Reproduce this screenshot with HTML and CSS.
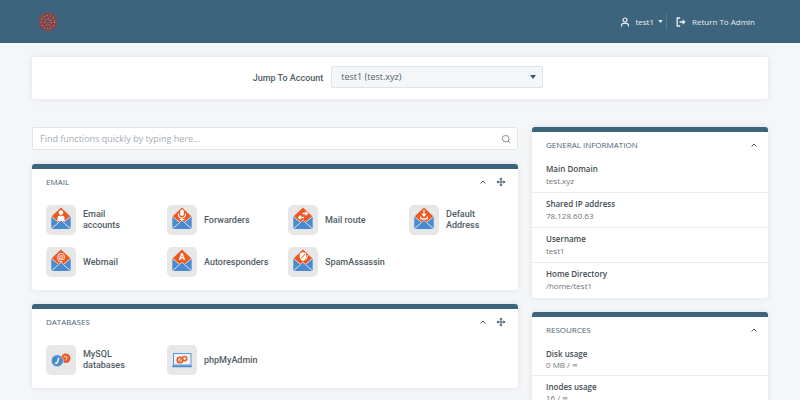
FILE: index.html
```html
<!DOCTYPE html>
<html lang="en">
<head>
<meta charset="utf-8">
<meta name="viewport" content="width=device-width, initial-scale=1">
<title>Control panel</title>
<link rel="stylesheet" href="styles.css">
</head>
<body>
<svg class="defs" aria-hidden="true">
  <defs>
    <g id="flap">
      <path d="M15 2.500 L24.500 11.500 L15 20 L5.500 11.500 Z" fill="#ec5a24"/>
    </g>
    <g id="pocket">
      <path d="M5.300 11.500 L12.500 17.500 L5.300 23.500 Z M24.700 11.500 L17.500 17.500 L24.700 23.500 Z" fill="#4a8bd0"/>
      <path d="M5.500 24 L15 15.500 L24.500 24 Z" fill="#4a8bd0"/>
      <path d="M12.500 17.600 L5.500 23.800 M17.500 17.600 L24.500 23.800" fill="none" stroke="#f5f5f5" stroke-width=".6"/>
      <path d="M5.300 11.300 L12.500 17.400 L15 15.200 L17.500 17.400 L24.700 11.300" fill="none" stroke="#f5f5f5" stroke-width=".7"/>
    </g>
    <symbol id="chevron" viewBox="0 0 8 8"><path d="M1.500 5.500 L4 3 L6.500 5.500" fill="none" stroke="currentColor" stroke-width="1"/></symbol>
    <symbol id="move" viewBox="0 0 10 10"><path d="M5 1v8M1 5h8" stroke="currentColor" stroke-width="1"/><path d="M5 .5 3.300 2.600h3.400ZM5 9.500 3.300 7.400h3.400ZM.5 5l2.100-1.700v3.400ZM9.500 5 7.400 3.300v3.400Z" fill="currentColor"/></symbol>
  </defs>
</svg>

<header class="topbar">
  <a class="logo" href="#" aria-label="Home">
    <svg viewBox="0 0 20 20" width="20" height="20" aria-hidden="true">
      <circle cx="10" cy="10" r="8.500" fill="#7a4a4e"/>
      <circle cx="10" cy="10" r="8.500" fill="none" stroke="#a8383e" stroke-width="1.400" stroke-dasharray="1.700 .7"/>
      <circle cx="10" cy="10" r="6.600" fill="none" stroke="#b09a96" stroke-width="1.200" stroke-dasharray="1 2.300"/>
      <circle cx="10" cy="10" r="5" fill="none" stroke="#9c3238" stroke-width="1.500" stroke-dasharray="1.700 1.500"/>
      <circle cx="10" cy="10" r="3.300" fill="none" stroke="#a89490" stroke-width="1.200" stroke-dasharray="1 2"/>
      <circle cx="10" cy="10" r="1.500" fill="none" stroke="#9c4a4c" stroke-width="1" stroke-dasharray="1 1"/>
    </svg>
  </a>
  <nav class="topnav">
    <button class="user" type="button">
      <svg viewBox="0 0 10 10" width="10" height="10" aria-hidden="true"><circle cx="5" cy="3" r="2" fill="none" stroke="currentColor" stroke-width="1.200"/><path d="M1.500 9.500V8.400C1.500 7 3 6.100 5 6.100S8.500 7 8.500 8.400V9.500" fill="none" stroke="currentColor" stroke-width="1.200"/></svg>
      <span>test1</span>
      <svg class="caret" viewBox="0 0 6 4" width="5" height="3" aria-hidden="true"><path d="M0 0h6L3 4Z" fill="currentColor"/></svg>
    </button>
    <a class="return" href="#">
      <svg viewBox="0 0 10 10" width="10" height="10" aria-hidden="true"><path d="M4.200 1H1.200v8h3M3.500 5H8" fill="none" stroke="currentColor" stroke-width="1.300"/><path d="M6.600 2.300 9.600 5 6.600 7.700Z" fill="currentColor"/></svg>
      <span>Return To Admin</span>
    </a>
  </nav>
</header>

<div class="page">
  <form class="jump">
    <label for="account">Jump To Account</label>
    <select id="account"><option>test1 (test.xyz)</option></select>
  </form>

  <div class="columns">
    <main class="stack">
      <div class="search">
        <input type="search" aria-label="Find functions" placeholder="Find functions quickly by typing here...">
        <svg viewBox="0 0 10 10" width="10" height="10" aria-hidden="true"><circle cx="4.700" cy="4.700" r="3.300" fill="none" stroke="currentColor"/><path d="M7 7l2.200 2.200" stroke="currentColor"/></svg>
      </div>

      <section class="panel">
        <div class="head">
          <h2>EMAIL</h2>
          <button type="button" aria-label="Collapse"><svg width="8" height="8"><use href="#chevron"/></svg></button>
          <button type="button" aria-label="Move"><svg width="10" height="10"><use href="#move"/></svg></button>
        </div>
        <div class="tiles">
          <a class="tile" href="#"><svg viewBox="0 0 30 30"><use href="#flap"/><circle cx="15" cy="7.600" r="2.300" fill="#fff"/><path d="M11.500 16V12.800q0-2 2-2h3q2 0 2 2V16Z" fill="#fff"/><use href="#pocket"/></svg><span>Email<br>accounts</span></a>
          <a class="tile" href="#"><svg viewBox="0 0 30 30"><use href="#flap"/><rect x="13.200" y="4.500" width="3.600" height="6.500" rx="1.800" fill="#fff"/><path d="M11.500 8.500v1a3.500 3.500 0 0 0 7 0v-1M15 13v2.500M12.500 14.500h5" fill="none" stroke="#fff" stroke-width="1.100"/><use href="#pocket"/></svg><span>Forwarders</span></a>
          <a class="tile" href="#"><svg viewBox="0 0 30 30"><use href="#flap"/><path d="M14.500 8.500H18M16 12.500h-4" stroke="#fff" stroke-width="1.500"/><path d="M17.500 6l3 2.500-3 2.500ZM12.700 10l-3 2.500 3 2.500Z" fill="#fff"/><use href="#pocket"/></svg><span>Mail route</span></a>
          <a class="tile" href="#"><svg viewBox="0 0 30 30"><use href="#flap"/><path d="M15 5v5M11.800 11.500v2.300h6.400v-2.300" fill="none" stroke="#fff" stroke-width="1.200"/><path d="M12.500 8.800h5L15 12Z" fill="#fff"/><use href="#pocket"/></svg><span>Default<br>Address</span></a>
          <a class="tile" href="#"><svg viewBox="0 0 30 30"><use href="#flap"/><text x="15" y="12.500" text-anchor="middle" font-size="9">@</text><use href="#pocket"/></svg><span>Webmail</span></a>
          <a class="tile" href="#"><svg viewBox="0 0 30 30"><use href="#flap"/><text x="15" y="13" text-anchor="middle" font-size="9" font-weight="700">A</text><use href="#pocket"/></svg><span>Autoresponders</span></a>
          <a class="tile" href="#"><svg viewBox="0 0 30 30"><use href="#flap"/><path d="M11.800 6.500 15 5l3.200 1.500v4Q17.500 13 15 14.300 12.500 13 11.800 10.500Z" fill="#fff"/><path d="M13.300 11.500 17 7" stroke="#ec5a24" stroke-width="1"/><path d="M18 12.500 20 8" stroke="#fff" stroke-width=".9"/><use href="#pocket"/></svg><span>SpamAssassin</span></a>
        </div>
      </section>

      <section class="panel">
        <div class="head">
          <h2>DATABASES</h2>
          <button type="button" aria-label="Collapse"><svg width="8" height="8"><use href="#chevron"/></svg></button>
          <button type="button" aria-label="Move"><svg width="10" height="10"><use href="#move"/></svg></button>
        </div>
        <div class="tiles">
          <a class="tile" href="#"><svg viewBox="0 0 30 30"><circle cx="19.700" cy="13.300" r="4.800" fill="#ec5a24"/><path d="M17.800 12q2-1.600 3 0t-1.600 3.500" fill="none" stroke="#eee" stroke-width="1"/><circle cx="11.300" cy="15.800" r="6" fill="#4a8bd0" stroke="#e8e8e8" stroke-width=".6"/><path d="M8.500 19q.8-2 2.500-2.500l1-4 1.500.5q-.5 4-2.500 6" fill="#eee"/></svg><span>MySQL<br>databases</span></a>
          <a class="tile" href="#"><svg viewBox="0 0 30 30"><rect x="6.500" y="8.500" width="17.500" height="11.500" fill="#edf1f5" stroke="#5c98d5"/><path d="M5 20.500h20v1q0 .8-1 .8H6q-1 0-1-.8Z" fill="#4a8bd0"/><circle cx="13" cy="15" r="2.700" fill="none" stroke="#ec5a24" stroke-width="1.700"/><circle cx="17.600" cy="13.600" r="2.200" fill="none" stroke="#ec5a24" stroke-width="1.500"/><path d="M12 17l1.800-3" stroke="#ec5a24"/></svg><span>phpMyAdmin</span></a>
        </div>
      </section>
    </main>

    <aside class="stack">
      <section class="panel">
        <div class="head">
          <h2>GENERAL INFORMATION</h2>
          <button type="button" aria-label="Collapse"><svg width="8" height="8"><use href="#chevron"/></svg></button>
        </div>
        <dl class="facts">
          <div><dt>Main Domain</dt><dd>test.xyz</dd></div>
          <div><dt>Shared IP address</dt><dd>78.128.60.63</dd></div>
          <div><dt>Username</dt><dd>test1</dd></div>
          <div><dt>Home Directory</dt><dd>/home/test1</dd></div>
        </dl>
      </section>
      <section class="panel">
        <div class="head">
          <h2>RESOURCES</h2>
          <button type="button" aria-label="Collapse"><svg width="8" height="8"><use href="#chevron"/></svg></button>
        </div>
        <dl class="facts compact">
          <div><dt>Disk usage</dt><dd>0 MB / ∞</dd></div>
          <div><dt>Inodes usage</dt><dd>16 / ∞</dd></div>
        </dl>
      </section>
    </aside>
  </div>
</div>
</body>
</html>
```

FILE: styles.css
```css
* { box-sizing: border-box; }

html { scrollbar-width: none; }

body {
  margin: 0;
  background: #f4f6f8;
  color: #515d64;
  font: 9px/12px "Open Sans", sans-serif;
}

a { color: inherit; text-decoration: none; }

button {
  display: flex;
  align-items: center;
  padding: 0;
  border: 0;
  background: none;
  color: inherit;
  font: inherit;
}

svg { display: block; flex: none; }

.defs { position: absolute; width: 0; height: 0; }

.topbar {
  display: flex;
  align-items: center;
  justify-content: space-between;
  height: 43px;
  padding: 0 45px 0 38px;
  background: #3c647d;
  color: #e9eff3;
}

.topnav { display: flex; align-items: center; font-size: 8px; font-weight: 500; }

.user {
  gap: 5px;
  height: 16px;
  padding-right: 3px;
  border-right: 1px solid #5d7a83;
}

.caret { margin-left: -1px; }

.return { display: flex; align-items: center; gap: 6px; padding-left: 9px; }

.page { padding: 14px 32px; }

.jump {
  display: flex;
  align-items: center;
  justify-content: center;
  gap: 8px;
  height: 42px;
  margin-bottom: 28px;
  padding-right: 4px;
  border-radius: 2px;
  background: #fff;
  box-shadow: 0 0 6px rgba(40, 60, 80, .1);
}

.jump label, .tile { font-family: Roboto, sans-serif; font-weight: 500; }

.jump select {
  appearance: none;
  width: 212px;
  height: 22px;
  margin-bottom: 2px;
  padding: 0 9px;
  border: 1px solid #dde3e7;
  border-radius: 2px;
  background: #f4f6f8 url("data:image/svg+xml,%3Csvg xmlns='http://www.w3.org/2000/svg' viewBox='0 0 6 4'%3E%3Cpath d='M0 0h6L3 4Z' fill='%23345b73'/%3E%3C/svg%3E") no-repeat right 6px center / 6px 4px;
  color: #515d64;
  font: 9px/12px "Open Sans", sans-serif;
}

.columns {
  display: grid;
  grid-template-columns: minmax(0, 486fr) minmax(0, 236fr);
  gap: 14px;
  align-items: start;
}

.stack { display: grid; gap: 14px; }

.search {
  display: flex;
  align-items: center;
  height: 23px;
  padding: 0 6px 0 7px;
  border: 1px solid #dfe5e8;
  border-radius: 2px;
  background: #fff;
  color: #879198;
}

.search input {
  flex: 1;
  min-width: 0;
  padding: 0;
  border: 0;
  outline: 0;
  background: none;
  font: 9px/12px "Open Sans", sans-serif;
}

.search input::placeholder { color: #a5adb3; }

.panel {
  border-top: 5px solid #3c647d;
  border-radius: 3px;
  background: #fff;
  box-shadow: 0 0 6px rgba(40, 60, 80, .1);
}

.head {
  display: flex;
  align-items: center;
  gap: 9px;
  height: 25px;
  padding: 0 12px 0 14px;
  color: #4a5f75;
}

.head h2 {
  flex: 1;
  margin: 0;
  font-size: 8px;
  line-height: 12px;
  font-weight: 500;
}

aside .head { height: 26px; padding-right: 10px; }

.tiles {
  display: grid;
  grid-template-columns: repeat(4, minmax(0, 1fr));
  gap: 12px 0;
  padding: 11px 2px 13px 0;
}

.tile {
  display: flex;
  align-items: center;
  gap: 7px;
  padding-left: 14px;
  line-height: 11px;
}

.tile svg {
  width: 30px;
  height: 30px;
  border-radius: 5px;
  background: #e7e7e8;
}

.tile text { fill: #fff; font-family: Roboto, sans-serif; }

.facts { margin: 0; }

.facts div { padding: 5px 14px; border-bottom: 1px solid #e9edf0; }

.facts div:last-child { border-bottom-color: transparent; }

.facts dt { color: #454d53; font-size: 8px; font-weight: 600; }

.facts dd { margin: 0; color: #6c757a; font-size: 8px; }

.compact dd { line-height: 10px; }
```
